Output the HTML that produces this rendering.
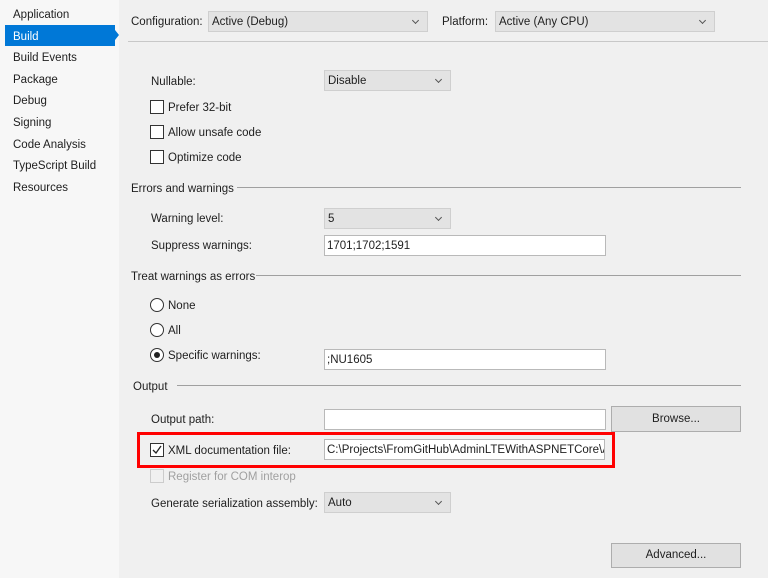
<!DOCTYPE html><html><head><style>
body{margin:0;width:768px;height:578px;background:#f0f0f0;font-family:"Liberation Sans",sans-serif;font-size:11.5px;color:#1e1e1e;position:relative;overflow:hidden}
.a{position:absolute;white-space:nowrap;line-height:14px;margin-top:1px}
.side{position:absolute;left:0;top:0;width:119px;height:578px;background:#f7f7f7}
.sel{position:absolute;left:5px;top:25px;width:110px;height:21px;background:#0078d7}
.dd{position:absolute;background:#e3e3e3;border:1px solid #cfcfcf;box-sizing:border-box;padding-left:3px;line-height:20px}
.dd:after{content:"";position:absolute;right:9px;top:6px;width:4px;height:4px;border-right:1px solid #555;border-bottom:1px solid #555;transform:rotate(45deg)}
.in{position:absolute;background:#fff;border:1px solid #b9b9b9;box-sizing:border-box;padding-left:2px;line-height:20px;overflow:hidden;white-space:nowrap}
.cb{position:absolute;width:12px;height:12px;border:1px solid #333;background:#fff}
.rb{position:absolute;width:12px;height:12px;border:1px solid #333;border-radius:50%;background:#fff}
.ln{position:absolute;height:1px;background:#a0a0a0}
.btn{position:absolute;background:#e1e1e1;border:1px solid #adadad;box-sizing:border-box;text-align:center}
</style></head><body>
<div class="side"></div>
<div class="sel"></div>
<div style="position:absolute;left:115px;top:30px;width:0;height:0;border-top:5px solid transparent;border-bottom:5px solid transparent;border-left:4px solid #0078d7"></div>
<div class="a" style="left:13px;top:7px">Application</div>
<div class="a" style="left:13px;top:29px;color:#fff">Build</div>
<div class="a" style="left:13px;top:50px">Build Events</div>
<div class="a" style="left:13px;top:72px">Package</div>
<div class="a" style="left:13px;top:93px">Debug</div>
<div class="a" style="left:13px;top:115px">Signing</div>
<div class="a" style="left:13px;top:137px">Code Analysis</div>
<div class="a" style="left:13px;top:158px">TypeScript Build</div>
<div class="a" style="left:13px;top:180px">Resources</div>

<div class="a" style="left:131px;top:14px">Configuration:</div>
<div class="dd" style="left:208px;top:11px;width:220px;height:21px">Active (Debug)</div>
<div class="a" style="left:442px;top:14px">Platform:</div>
<div class="dd" style="left:495px;top:11px;width:220px;height:21px">Active (Any CPU)</div>
<div class="ln" style="left:128px;top:41px;width:640px;background:#c8c8c8"></div>

<div class="a" style="left:151px;top:74px">Nullable:</div>
<div class="dd" style="left:324px;top:70px;width:127px;height:21px">Disable</div>
<div class="cb" style="left:150px;top:100px"></div><div class="a" style="left:168px;top:100px">Prefer 32-bit</div>
<div class="cb" style="left:150px;top:125px"></div><div class="a" style="left:168px;top:125px">Allow unsafe code</div>
<div class="cb" style="left:150px;top:150px"></div><div class="a" style="left:168px;top:150px">Optimize code</div>

<div class="a" style="left:131px;top:181px">Errors and warnings</div>
<div class="ln" style="left:237px;top:187px;width:504px"></div>
<div class="a" style="left:151px;top:211px">Warning level:</div>
<div class="dd" style="left:324px;top:208px;width:127px;height:21px">5</div>
<div class="a" style="left:151px;top:238px">Suppress warnings:</div>
<div class="in" style="left:324px;top:235px;width:282px;height:21px">1701;1702;1591</div>

<div class="a" style="left:131px;top:269px">Treat warnings as errors</div>
<div class="ln" style="left:256px;top:275px;width:485px"></div>
<div class="rb" style="left:150px;top:298px"></div><div class="a" style="left:168px;top:298px">None</div>
<div class="rb" style="left:150px;top:323px"></div><div class="a" style="left:168px;top:323px">All</div>
<div class="rb" style="left:150px;top:348px"></div><div style="position:absolute;left:154px;top:352px;width:6px;height:6px;border-radius:50%;background:#222"></div><div class="a" style="left:168px;top:348px">Specific warnings:</div>
<div class="in" style="left:324px;top:349px;width:282px;height:21px">;NU1605</div>

<div class="a" style="left:133px;top:379px">Output</div>
<div class="ln" style="left:177px;top:385px;width:564px"></div>
<div class="a" style="left:151px;top:412px">Output path:</div>
<div class="in" style="left:324px;top:409px;width:282px;height:21px"></div>
<div class="btn" style="left:611px;top:406px;width:130px;height:26px;line-height:24px">Browse...</div>

<div style="position:absolute;left:137px;top:432px;width:472px;height:30px;border:3px solid #f00"></div>
<div class="cb" style="left:150px;top:443px"></div>
<svg style="position:absolute;left:151px;top:444px" width="12" height="12"><path d="M2 6 L5 9 L10 2" fill="none" stroke="#222" stroke-width="1.3"/></svg>
<div class="a" style="left:168px;top:443px">XML documentation file:</div>
<div class="in" style="left:324px;top:439px;width:281px;height:21px">C:\Projects\FromGitHub\AdminLTEWithASPNETCore\AdminLTE</div>
<div class="cb" style="left:150px;top:469px;border-color:#ccc;background:#f0f0f0"></div>
<div class="a" style="left:168px;top:469px;color:#a0a0a0">Register for COM interop</div>
<div class="a" style="left:151px;top:496px">Generate serialization assembly:</div>
<div class="dd" style="left:324px;top:492px;width:127px;height:21px">Auto</div>
<div class="btn" style="left:611px;top:543px;width:130px;height:25px;line-height:23px">Advanced...</div>
</body></html>
